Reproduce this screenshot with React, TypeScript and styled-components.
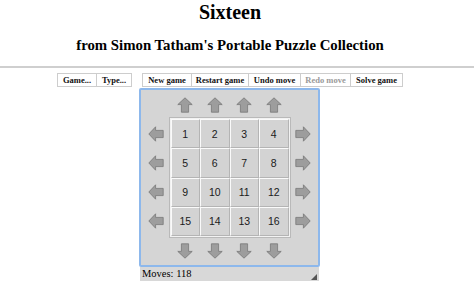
import React from "react";
import styled, { createGlobalStyle } from "styled-components";

const GlobalStyle = createGlobalStyle`
  body {
    margin: 0;
    background: #fff;
    font-family: "Liberation Serif", "Times New Roman", serif;
    color: #000;
  }
`;

const Page = styled.div`
  width: 474px;
  height: 285px;
  overflow: hidden;
`;

const Header = styled.div`
  width: 460px;
`;

const Title = styled.h1`
  margin: 0;
  height: 35px;
  font-size: 20px;
  line-height: 24px;
  font-weight: bold;
  text-align: center;
`;

const Subtitle = styled.h2`
  margin: 0;
  height: 31px;
  font-size: 14.8px;
  line-height: 20px;
  font-weight: bold;
  text-align: center;
`;

const Rule = styled.div`
  height: 2px;
  background: #cfcfcf;
  margin-bottom: 5px;
`;

const Toolbar = styled.div`
  display: flex;
  padding-left: 58px;
  gap: 11px;
`;

const ButtonGroup = styled.div`
  display: flex;
`;

const ToolButton = styled.div<{ $w: number; $disabled?: boolean }>`
  box-sizing: border-box;
  width: ${(p) => p.$w}px;
  height: 14px;
  border: 1px solid #cdcdcd;
  margin-left: -1px;
  font-size: 8.5px;
  line-height: 12px;
  font-weight: bold;
  text-align: center;
  white-space: nowrap;
  color: ${(p) => (p.$disabled ? "#9a9a9a" : "#111")};
  background: #fff;
`;

const PuzzleArea = styled.div`
  position: relative;
  margin-left: 139px;
  margin-top: 1px;
  width: 181px;
`;

const Canvas = styled.div`
  box-sizing: border-box;
  width: 181px;
  height: 179px;
  border: 2px solid #8db8ec;
  border-radius: 2px;
  background: #d5d5d5;
  display: grid;
  grid-template-columns: repeat(6, 29.5px);
  grid-template-rows: repeat(6, 29.2px);
`;

const Cell = styled.div<{ $col: number; $row: number }>`
  grid-column: ${(p) => p.$col};
  grid-row: ${(p) => p.$row};
  display: flex;
  align-items: center;
  justify-content: center;
`;

const Board = styled.div`
  grid-column: 2 / 6;
  grid-row: 2 / 6;
  margin: -1px;
  border: 1px solid #f2f2f2;
  box-shadow: 0 0 0 1px #b9b9b9;
  display: grid;
  grid-template-columns: repeat(4, 1fr);
  grid-template-rows: repeat(4, 1fr);
`;

const Tile = styled.div`
  box-sizing: border-box;
  border-top: 1px solid #fafafa;
  border-left: 1px solid #fafafa;
  border-right: 1px solid #b4b4b4;
  border-bottom: 1px solid #b4b4b4;
  background: #d3d3d3;
  display: flex;
  align-items: center;
  justify-content: center;
  font-family: "Liberation Sans", Arial, sans-serif;
  font-size: 10.5px;
  color: #1a1a1a;
`;

const StatusBar = styled.div`
  box-sizing: border-box;
  width: 179px;
  margin-left: 1px;
  height: 14px;
  background: #d8d8d8;
  font-size: 10.5px;
  line-height: 14px;
  padding-left: 2px;
`;

const Grip = styled.svg`
  position: absolute;
  right: 3px;
  bottom: 1px;
`;

type Dir = "up" | "down" | "left" | "right";

const rotation: Record<Dir, number> = { up: 0, right: 90, down: 180, left: 270 };

const Arrow = ({ dir }: { dir: Dir }) => (
  <svg width="16" height="16" viewBox="0 0 16 16">
    <polygon
      points="8,0.8 15.2,7.6 11.6,7.6 11.6,15.2 4.4,15.2 4.4,7.6 0.8,7.6"
      fill="#9d9d9d"
      stroke="#777"
      strokeWidth="0.8"
      strokeLinejoin="round"
      transform={`rotate(${rotation[dir]} 8 8)`}
    />
  </svg>
);

const tiles = [1, 2, 3, 4, 5, 6, 7, 8, 9, 10, 11, 12, 15, 14, 13, 16];

export default function App() {
  const cols = [2, 3, 4, 5];
  return (
    <Page>
      <GlobalStyle />
      <Header>
        <Title>Sixteen</Title>
        <Subtitle>from Simon Tatham's Portable Puzzle Collection</Subtitle>
      </Header>
      <Rule />
      <Toolbar>
        <ButtonGroup>
          <ToolButton $w={40}>Game...</ToolButton>
          <ToolButton $w={36}>Type...</ToolButton>
        </ButtonGroup>
        <ButtonGroup>
          <ToolButton $w={50}>New game</ToolButton>
          <ToolButton $w={58}>Restart game</ToolButton>
          <ToolButton $w={53}>Undo move</ToolButton>
          <ToolButton $w={51} $disabled>
            Redo move
          </ToolButton>
          <ToolButton $w={53}>Solve game</ToolButton>
        </ButtonGroup>
      </Toolbar>
      <PuzzleArea>
        <Canvas>
          {cols.map((c) => (
            <Cell key={`u${c}`} $col={c} $row={1}>
              <Arrow dir="up" />
            </Cell>
          ))}
          {cols.map((r) => (
            <Cell key={`l${r}`} $col={1} $row={r}>
              <Arrow dir="left" />
            </Cell>
          ))}
          {cols.map((r) => (
            <Cell key={`r${r}`} $col={6} $row={r}>
              <Arrow dir="right" />
            </Cell>
          ))}
          {cols.map((c) => (
            <Cell key={`d${c}`} $col={c} $row={6}>
              <Arrow dir="down" />
            </Cell>
          ))}
          <Board>
            {tiles.map((n) => (
              <Tile key={n}>{n}</Tile>
            ))}
          </Board>
        </Canvas>
        <StatusBar>Moves: 118</StatusBar>
        <Grip width="6" height="6" viewBox="0 0 6 6">
          <polygon points="6,0 6,6 0,6" fill="#555" />
        </Grip>
      </PuzzleArea>
    </Page>
  );
}
